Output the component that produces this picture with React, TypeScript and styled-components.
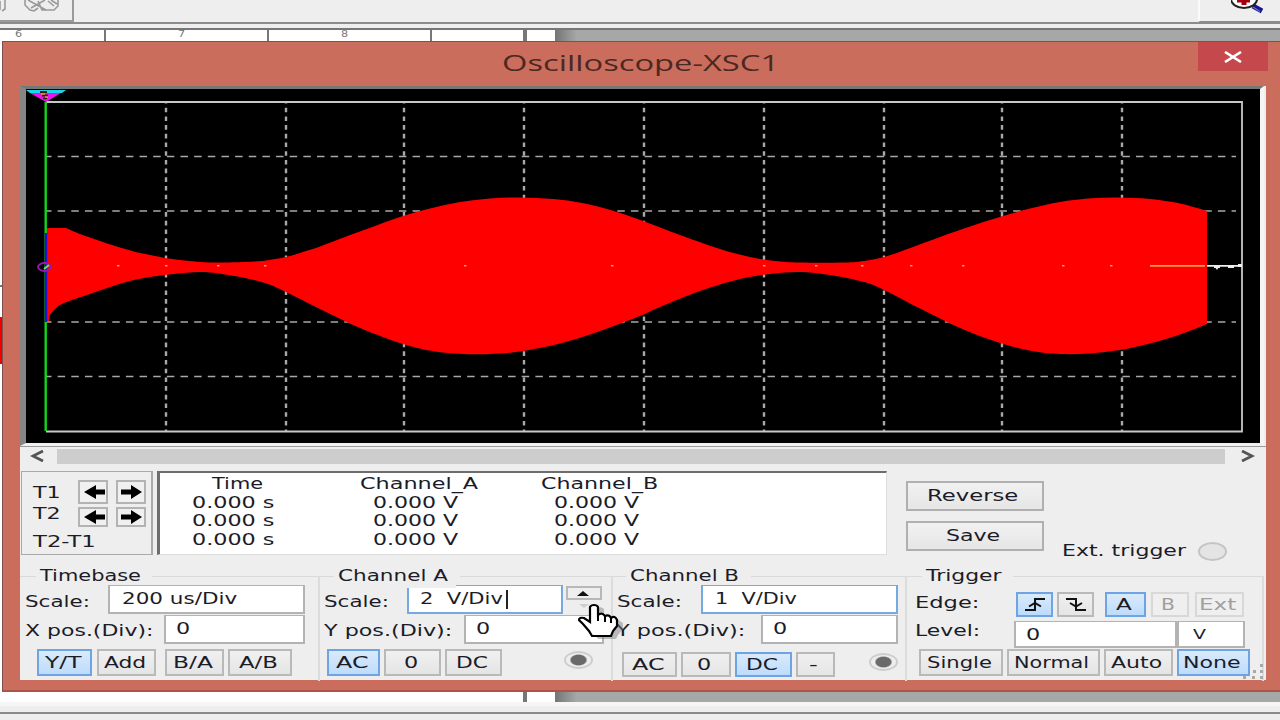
import React, { useLayoutEffect, useRef, useState } from "react";
import styled, { createGlobalStyle } from "styled-components";

const Global = createGlobalStyle`
  * { box-sizing: border-box; }
  body { margin: 0; overflow: hidden; font-family: "DejaVu Sans", sans-serif; color: #1c1c28; }
  svg { display: block; }
`;

const Desktop = styled.div`
  position: relative; width: 1280px; height: 720px; overflow: hidden;
  background: #eeeeee; display: flex; flex-direction: column;
`;
const Toolbar = styled.div`
  height: 24px; flex: none; display: flex; justify-content: space-between;
  border-bottom: 2px solid #8c8c8c;
`;
const ToolStart = styled.div`
  width: 74px; height: 22px; border-right: 2px solid #9a9a9a; border-bottom: 2px solid #9a9a9a;
`;
const ToolEnd = styled.div`
  width: 82px; height: 22px; border-left: 2px solid #fafafa; border-bottom: 1px solid #8c8c8c; padding-left: 31px;
`;
const Workspace = styled.div`
  height: 678px; margin-top: 4px; flex: none; display: flex; border-top: 2px solid #777;
  border-bottom: 4px solid #f6f6f6; background: #a6a8a8;
`;
const Sheet = styled.div`
  width: 555px; background: #fff; display: flex; align-items: flex-start; font-size: 9px; color: #777;
`;
const RulerCell = styled.div<{ $w: number; $p: number }>`
  width: ${p => p.$w}px; padding-left: ${p => p.$p}px; height: 12px; line-height: 9px; border-right: 2px solid #777; flex: none;
`;
const SheetEdge = styled.div`width: 4px; height: 100%; margin-left: 91px; background: #777;`;
const SheetShadow = styled.div`width: 22px; background: linear-gradient(90deg, #747474, #a6a8a8);`;
const StatusBar = styled.div`margin-top: 6px; height: 9px; border-top: 2px solid #8a8a8a;`;
const LeftStrip = styled.div`
  position: absolute; left: 0; top: 285px; width: 3px; height: 79px; border-top: 2px solid #777;
  background: linear-gradient(#fff 30px, #ee0000 30px);
`;

const Window = styled.div`
  position: absolute; left: 2px; top: 41px; width: 1290px; height: 651px; background: #cb6d5d;
  border: 1px solid #80504a; border-bottom: 2px solid #a8564b; padding: 0 0 0 17px; display: flex; flex-direction: column;
`;
const TitleBar = styled.div`height: 44px; flex: none; display: flex; color: #4a2823;`;
const TitleText = styled.div`
  width: 695px; padding: 5px 0 0 482px; height: 40px; flex: none; font-family: "Open Sans", sans-serif; font-size: 22px;
`;
const Close = styled.div`
  width: 70px; height: 29px; margin-left: 483px; background: #c5494c; display: flex; align-items: center; justify-content: center;
`;
const Client = styled.div`width: 1246px; height: 594px; background: #eeeeee; display: flex; flex-direction: column;`;
const ScopeFrame = styled.div`
  height: 360px; flex: none; border: solid; border-width: 3px 4px 3px 6px;
  border-color: #777 #f5f5f5 #f0f0f0 #858585; background: #000; width: 1244px;
`;
const Scrollbar = styled.div`
  height: 18px; flex: none; border-top: 1px solid #999; padding: 1px 10px 0 10px; display: flex; align-items: center;
`;
const Thumb = styled.div`width: 1168px; height: 15px; background: #cdcdcd; margin: 0 15px 0 12px;`;
const Readout = styled.div`height: 85px; margin-top: 7px; flex: none; display: flex;`;
const CursorBox = styled.div`
  width: 132px; margin-left: 1px; height: 84px; border: 2px solid #aaa; border-width: 1px 2px 1px 1px; display: flex; padding: 0 0 0 11px;
`;
const CursorLabels = styled.div`width: 45px; padding-top: 10px; flex: none;`;
const CursorLine = styled.div<{ $h: number }>`height: ${p => p.$h}px; line-height: 22px;`;
const ArrowGrid = styled.div`
  display: grid; grid-template-columns: 30px 30px; grid-auto-rows: 24px 20px; column-gap: 8px; row-gap: 3px; padding-top: 8px;
`;
const ArrowButton = styled.div<{ $left?: boolean }>`
  border: 2px solid #b3b3b3; background: #f0f0f0; display: flex; align-items: center;
  justify-content: ${p => (p.$left ? "flex-end" : "center")};
`;
const Table = styled.div`
  width: 730px; margin-left: 4px; height: 84px; background: #fff; border: solid; border-width: 2px 1px 1px 3px;
  border-color: #6d6d6d #ddd #ddd #6d6d6d; display: flex; padding-top: 2px;
`;
const Column = styled.div<{ $ml: number; $w: number }>`
  margin-left: ${p => p.$ml}px; width: ${p => p.$w}px; flex: none; display: flex; flex-direction: column;
`;
const Cell = styled.div<{ $in?: number }>`
  height: 18.7px; line-height: 18px; flex: none; padding-left: ${p => p.$in ?? 0}px;
`;
const Actions = styled.div`margin: 10px 0 0 19px; width: 138px; display: flex; flex-direction: column; gap: 10px;`;
const ActionButton = styled.div`
  height: 30px; border: 2px solid #b0b0b0; background: linear-gradient(#f1f1f1, #e6e6e6);
  display: flex; align-items: center; justify-content: center; padding-right: 3px;
`;
const ExtTrigger = styled.div`display: flex; align-items: center; gap: 10px; margin: 70px 0 0 18px; height: 20px;`;
const ExtLamp = styled.div`width: 29px; height: 19px; border: 2px solid #c4c4c4; border-radius: 50%; background: #e4e4e4; margin-top: 1px;`;

const Groups = styled.div`display: flex; height: 114px; margin-top: 11px; flex: none;`;
const Group = styled.div<{ $w: number }>`
  width: ${p => p.$w}px; height: 114px; flex: none; display: flex; flex-direction: column;
  border: solid; border-width: 0 2px 0 0;
  border-image: linear-gradient(transparent 10px, #dcdcdc 10px) 1;
`;
const Legend = styled.div<{ $lead: number }>`
  display: flex; align-items: center; height: 18px; line-height: 18px; gap: 4px; flex: none;
  &::before { content: ""; width: ${p => p.$lead}px; height: 1px; background: #dadada; flex: none; }
  &::after { content: ""; flex: 1; height: 1px; background: #dadada; margin-left: 6px; }
`;
const Row = styled.div<{ $h: number; $mt: number; $pl: number }>`
  display: flex; align-items: flex-start; height: ${p => p.$h}px; margin-top: ${p => p.$mt}px; padding-left: ${p => p.$pl}px; flex: none;
`;
const Caption = styled.div<{ $w: number; $pt?: number }>`
  width: ${p => p.$w}px; flex: none; line-height: 20px; padding-top: ${p => p.$pt ?? 7}px;
`;
const Field = styled.div<{ $w: number; $h?: number; $pl: number; $focus?: boolean; $covered?: boolean; $lh?: number }>`
  position: relative; width: ${p => p.$w}px; height: ${p => p.$h ?? 29}px; flex: none; background: #fff; padding-left: ${p => p.$pl}px;
  border: solid ${p => (p.$focus ? "#75a9e2" : "#b3b3b3")}; border-width: 1px 2px 2px 2px; line-height: ${p => p.$lh ?? 27}px;
  display: flex;
  ${p => p.$covered && `&::before { content: ""; position: absolute; left: -2px; top: -1px; width: 49px; height: 3px; background: #eee; }`}
`;
const Caret = styled.div`width: 2px; height: 19px; background: #222; margin: 4px 0 0 1px;`;
const Btn = styled.div<{ $w: number; $ml?: number; $h?: number; $on?: boolean; $off?: boolean; $icon?: boolean }>`
  width: ${p => p.$w}px; height: ${p => p.$h ?? 27}px; margin-left: ${p => p.$ml ?? 0}px; flex: none;
  display: flex; align-items: center; justify-content: center; line-height: 20px; padding-right: ${p => (p.$icon ? 0 : 2)}px;
  border: 2px solid ${p => (p.$on ? "#6ea4e4" : p.$off ? "#d8d8d8" : "#b9b9b9")};
  background: ${p => (p.$on ? "linear-gradient(#d9eafc, #bddcfb)" : p.$off ? "#efefef" : "linear-gradient(#f0f0f0, #e5e5e5)")};
  color: ${p => (p.$off ? "#a0a0a0" : "inherit")};
`;
const SpinnerColumn = styled.div`
  display: flex; flex-direction: column; align-items: center; gap: 4px; margin: 1px 0 0 3px;
`;
const Spinner = styled.div`
  width: 36px; height: 14px; border: 2px solid #b8b8b8; display: flex; align-items: center; justify-content: center; padding-right: 3px;
`;
const Terminal = styled.div<{ $ml: number; $mt: number }>`
  width: 29px; height: 18px; margin: ${p => p.$mt}px 0 0 ${p => p.$ml}px; border: 2px solid #cdcdcd; border-radius: 50%; flex: none;
  background: radial-gradient(ellipse 9px 6px, #6a6a6a 80%, #eee 100%);
`;
const Grip = styled.svg`position: absolute; left: 1238px; top: 622px;`;
const Pointer = styled.svg`position: absolute; left: 574px; top: 601px;`;

const Stretch = styled.span<{ $size: number }>`
  display: inline-block; flex: none; font-size: ${p => p.$size}px; white-space: pre; vertical-align: top;
`;
const StretchInner = styled.span`display: inline-block; transform-origin: 0 50%; white-space: pre;`;

function T({ w, size = 15.4, children }: { w: number; size?: number; children: string }) {
  const ref = useRef<HTMLSpanElement>(null);
  const [k, setK] = useState(1.37);
  useLayoutEffect(() => {
    if (ref.current) setK((w - 1.5) / ref.current.offsetWidth);
  }, [w, children]);
  return (
    <Stretch $size={size} style={{ width: w }}>
      <StretchInner ref={ref} style={{ transform: `scaleX(${k})` }}>{children}</StretchInner>
    </Stretch>
  );
}

type Pt = [number, number];

const upper: Pt[] = [
  [66, 228], [80, 234], [97, 240], [112, 245], [132, 251], [150, 255], [165, 258], [180, 260], [200, 262], [220, 262.5],
  [245, 262], [262, 261], [272, 259.5], [286, 257], [300, 253], [320, 246.5], [345, 237], [375, 226], [403, 216], [430, 208.5],
  [460, 202], [490, 198.5], [520, 197.5], [553, 199], [582, 203], [612, 210.5], [643, 221], [680, 235], [720, 249], [750, 257],
  [775, 261], [800, 262.5], [845, 262.5], [864, 261], [884, 257], [902, 251], [940, 237], [970, 226.5], [1000, 217], [1030, 208.5],
  [1060, 202], [1088, 198.5], [1118, 197.5], [1150, 199], [1180, 203.5], [1207, 211],
];
const lower: Pt[] = [
  [1207, 324], [1180, 334.5], [1150, 343.5], [1120, 350], [1090, 353.5], [1060, 354], [1035, 351.5], [1000, 343], [960, 328],
  [920, 308.5], [880, 288], [860, 281], [830, 275], [800, 272], [770, 274], [740, 279], [700, 291], [660, 307], [640, 316],
  [600, 331], [560, 343.5], [520, 351.5], [490, 354], [465, 354], [435, 351.5], [403, 344], [360, 328], [320, 309], [286, 292],
  [265, 283], [240, 277], [210, 272.5], [190, 272.5], [165, 275], [150, 277], [130, 281], [110, 287], [90, 294], [64, 303],
  [55, 309], [50, 315],
];

function spline(pts: Pt[]) {
  return pts
    .slice(1)
    .map((p, i) => {
      const a = pts[Math.max(i - 1, 0)];
      const b = pts[i];
      const d = pts[Math.min(i + 2, pts.length - 1)];
      return `C${b[0] + (p[0] - a[0]) / 6},${b[1] + (p[1] - a[1]) / 6} ${p[0] - (d[0] - b[0]) / 6},${p[1] - (d[1] - b[1]) / 6} ${p[0]},${p[1]}`;
    })
    .join(" ");
}

const wave = `M47,228 H66 ${spline(upper)} V324 ${spline(lower)} L49,321 H47 Z`;

function Scope() {
  return (
    <svg width="1234" height="354" viewBox="26 89 1234 354">
      <g stroke="#a8a8a8">
        {[166, 286, 404, 524, 644, 764, 884, 1002, 1122].map(x => (
          <line key={x} x1={x} x2={x} y1="102" y2="431" strokeWidth="2.4" strokeDasharray="4.6 4.1" strokeDashoffset="3" />
        ))}
        {[156.5, 211, 322, 376.5].map(y => (
          <line key={y} x1="45" x2="1236" y1={y} y2={y} strokeWidth="1.7" strokeDasharray="7.5 6.15" strokeDashoffset="1" />
        ))}
      </g>
      <path d="M46,102 H1242 V431.5 H46" fill="none" stroke="#c8c8c8" strokeWidth="1.8" />
      <path d={wave} fill="#ff0000" />
      <path d="M45.7,102 V431" stroke="#14d51c" strokeWidth="2.4" />
      <path d="M46,233 V322" stroke="#2410cf" strokeWidth="2.4" />
      <path d="M26,90 H66 L62,93 H30 Z" fill="#16d8e8" />
      <path d="M30,93 H61 L46,102 Z" fill="#ed12ee" />
      <path d="M40,92 H47 M42,95.5 H48 M43,98.3 H47" stroke="#332200" strokeWidth="1.8" />
      <path d="M41,94 H45 M45,97 H48" stroke="#e8d020" strokeWidth="1" />
      <ellipse cx="44.5" cy="267" rx="6.5" ry="4" fill="none" stroke="#9c14b8" strokeWidth="1.8" />
      <path d="M44,269 L49,265" stroke="#77dd55" strokeWidth="2" />
      {[118, 166, 218, 265, 465, 612, 764, 816, 862, 911, 963, 1063, 1111].map(x => (
        <rect key={x} x={x - 1} y="265" width="2.5" height="1.5" fill="#ff9a60" />
      ))}
      <path d="M1150,265.8 H1205" stroke="#ff9d42" strokeWidth="1.7" />
      <path d="M1207,265.8 H1242 M1214,267 H1220 M1228,267 H1234" stroke="#eee" strokeWidth="1.8" />
      <path d="M1215,267 H1219 L1217,270 Z M1238,264 H1242 V267 H1238 Z" fill="#eee" />
    </svg>
  );
}

function Arrow({ left }: { left?: boolean }) {
  return (
    <svg width="22" height="14" viewBox="0 0 22 14">
      <path d={left ? "M0,7 L12,0 V4.500 H21 V9.500 H12 V14 Z" : "M22,7 L11,0 V4.500 H1 V9.500 H11 V14 Z"} fill="#000" />
    </svg>
  );
}

function Chevron({ left }: { left?: boolean }) {
  return (
    <svg width="15" height="12" viewBox="0 0 15 12">
      <path d={left ? "M13,1 L3,6 L13,11" : "M2,1 L12,6 L2,11"} fill="none" stroke="#555" strokeWidth="2.8" />
    </svg>
  );
}

function EdgeIcon({ falling }: { falling?: boolean }) {
  return (
    <svg width="24" height="16" viewBox="0 0 24 16" fill="none" stroke="#111" strokeWidth="2">
      {falling ? <path d="M2,2 H12 V13 H22 M6,6 L12,9.500 L18,6" /> : <path d="M2,13 H12 V2 H22 M6,9.500 L12,6 L18,9.500" />}
    </svg>
  );
}

export default function App() {
  return (
    <Desktop>
      <Global />
      <Toolbar>
        <ToolStart>
          <svg width="64" height="13" viewBox="0 0 64 13" fill="none" stroke="#9a9a9a" strokeWidth="1.6">
            <path d="M0,1 V10 M5,0 V9 L2,11 M25,0 V5 L30,10 L34,11 L38,8 M28,0 L46,10 M45,0 L31,8 M38,1 L42,10 H54 L58,6 V0 M48,1 L54,6 M51,0 L57,4" />
          </svg>
        </ToolStart>
        <ToolEnd>
          <svg width="36" height="14" viewBox="0 0 36 14">
            <path d="M22,6 L31,11" stroke="#15158c" strokeWidth="5" />
            <path d="M22,7 L29,11.5" stroke="#7070d0" strokeWidth="1.2" />
            <ellipse cx="13" cy="-1" rx="13" ry="9" fill="#fff" stroke="#222" strokeWidth="2" />
            <path d="M6,0 H19 M13,-5 V5" stroke="#a40010" strokeWidth="5" />
          </svg>
        </ToolEnd>
      </Toolbar>
      <Workspace>
        <Sheet>
          <RulerCell $w={106} $p={15}><T w={9} size={9}>6</T></RulerCell>
          <RulerCell $w={163} $p={72}><T w={9} size={9}>7</T></RulerCell>
          <RulerCell $w={163} $p={72}><T w={9} size={9}>8</T></RulerCell>
          <SheetEdge />
        </Sheet>
        <SheetShadow />
      </Workspace>
      <StatusBar />
      <LeftStrip />

      <Window>
        <TitleBar>
          <TitleText><T w={278} size={22}>Oscilloscope-XSC1</T></TitleText>
          <Close>
            <svg width="20" height="12" viewBox="0 0 20 12"><path d="M2,1 L18,11 M18,1 L2,11" stroke="#fff" strokeWidth="2.6" /></svg>
          </Close>
        </TitleBar>
        <Client>
          <ScopeFrame><Scope /></ScopeFrame>
          <Scrollbar><Chevron left /><Thumb /><Chevron /></Scrollbar>
          <Readout>
            <CursorBox>
              <CursorLabels>
                <CursorLine $h={21}><T w={29}>T1</T></CursorLine>
                <CursorLine $h={28}><T w={29}>T2</T></CursorLine>
                <CursorLine $h={20}><T w={65}>T2-T1</T></CursorLine>
              </CursorLabels>
              <ArrowGrid>
                <ArrowButton $left><Arrow left /></ArrowButton>
                <ArrowButton><Arrow /></ArrowButton>
                <ArrowButton $left><Arrow left /></ArrowButton>
                <ArrowButton><Arrow /></ArrowButton>
              </ArrowGrid>
            </CursorBox>
            <Table>
              <Column $ml={32} $w={90}>
                <Cell $in={20}><T w={53}>Time</T></Cell>
                {[0, 1, 2].map(i => <Cell key={i}><T w={84}>0.000 s</T></Cell>)}
              </Column>
              <Column $ml={78} $w={120}>
                <Cell><T w={119}>Channel_A</T></Cell>
                {[0, 1, 2].map(i => <Cell key={i} $in={13}><T w={86}>0.000 V</T></Cell>)}
              </Column>
              <Column $ml={61} $w={118}>
                <Cell><T w={118}>Channel_B</T></Cell>
                {[0, 1, 2].map(i => <Cell key={i} $in={13}><T w={86}>0.000 V</T></Cell>)}
              </Column>
            </Table>
            <Actions>
              <ActionButton><T w={93}>Reverse</T></ActionButton>
              <ActionButton><T w={56}>Save</T></ActionButton>
            </Actions>
            <ExtTrigger><T w={126}>Ext. trigger</T><ExtLamp /></ExtTrigger>
          </Readout>
          <Groups>
            <Group $w={300}>
              <Legend $lead={16}><T w={102}>Timebase</T></Legend>
              <Row $h={29} $mt={0} $pl={5}>
                <Caption $w={83}><T w={67}>Scale:</T></Caption>
                <Field $w={197} $pl={12}><T w={116}>200 us/Div</T></Field>
              </Row>
              <Row $h={29} $mt={1} $pl={5}>
                <Caption $w={139} $pt={6}><T w={130}>X pos.(Div):</T></Caption>
                <Field $w={141} $pl={10}><T w={16}>0</T></Field>
              </Row>
              <Row $h={27} $mt={5} $pl={17}>
                <Btn $w={55} $on><T w={38}>Y/T</T></Btn>
                <Btn $w={59} $ml={5}><T w={44}>Add</T></Btn>
                <Btn $w={59} $ml={9}><T w={41}>B/A</T></Btn>
                <Btn $w={64} $ml={4}><T w={40}>A/B</T></Btn>
              </Row>
            </Group>
            <Group $w={293}>
              <Legend $lead={14}><T w={112}>Channel A</T></Legend>
              <Row $h={29} $mt={0} $pl={4}>
                <Caption $w={83}><T w={67}>Scale:</T></Caption>
                <Field $w={156} $pl={11} $focus $covered><T w={85}>2  V/Div</T><Caret /></Field>
                <SpinnerColumn>
                  <Spinner><svg width="12" height="5" viewBox="0 0 12 5"><path d="M0,5 L6,0 L12,5 Z" fill="#111" /></svg></Spinner>
                  <svg width="10" height="4" viewBox="0 0 10 4"><path d="M0,0 H10 L5,4 Z" fill="#cfcfcf" /></svg>
                </SpinnerColumn>
              </Row>
              <Row $h={29} $mt={1} $pl={4}>
                <Caption $w={140} $pt={6}><T w={130}>Y pos.(Div):</T></Caption>
                <Field $w={140} $pl={10}><T w={16}>0</T></Field>
              </Row>
              <Row $h={27} $mt={5} $pl={7}>
                <Btn $w={53} $on><T w={34}>AC</T></Btn>
                <Btn $w={57} $ml={4}><T w={16}>0</T></Btn>
                <Btn $w={57} $ml={4}><T w={34}>DC</T></Btn>
                <Terminal $ml={62} $mt={2} />
              </Row>
            </Group>
            <Group $w={294}>
              <Legend $lead={13}><T w={111}>Channel B</T></Legend>
              <Row $h={29} $mt={0} $pl={4}>
                <Caption $w={84}><T w={67}>Scale:</T></Caption>
                <Field $w={197} $pl={12} $focus><T w={84}>1  V/Div</T></Field>
              </Row>
              <Row $h={29} $mt={1} $pl={3}>
                <Caption $w={145} $pt={6}><T w={131}>Y pos.(Div):</T></Caption>
                <Field $w={137} $pl={10}><T w={16}>0</T></Field>
              </Row>
              <Row $h={25} $mt={8} $pl={9}>
                <Btn $w={55} $h={25}><T w={34}>AC</T></Btn>
                <Btn $w={50} $h={25} $ml={4}><T w={16}>0</T></Btn>
                <Btn $w={57} $h={25} $ml={4} $on><T w={34}>DC</T></Btn>
                <Btn $w={39} $h={25} $ml={4}><T w={11}>-</T></Btn>
                <Terminal $ml={34} $mt={1} />
              </Row>
            </Group>
            <Group $w={357}>
              <Legend $lead={15}><T w={77}>Trigger</T></Legend>
              <Row $h={25} $mt={7} $pl={8}>
                <Caption $w={101} $pt={1}><T w={66}>Edge:</T></Caption>
                <Btn $w={37} $h={25} $on $icon><EdgeIcon /></Btn>
                <Btn $w={37} $h={25} $ml={4} $icon><EdgeIcon falling /></Btn>
                <Btn $w={41} $h={25} $ml={11} $on><T w={18}>A</T></Btn>
                <Btn $w={38} $h={25} $ml={5} $off><T w={16}>B</T></Btn>
                <Btn $w={49} $h={25} $ml={6} $off><T w={39}>Ext</T></Btn>
              </Row>
              <Row $h={27} $mt={4} $pl={8}>
                <Caption $w={99} $pt={0}><T w={67}>Level:</T></Caption>
                <Field $w={163} $h={27} $pl={10} $lh={26}><T w={16}>0</T></Field>
                <Field $w={68} $h={27} $pl={14} $lh={24}><T w={15} size={14}>V</T></Field>
              </Row>
              <Row $h={27} $mt={1} $pl={12}>
                <Btn $w={84}><T w={66}>Single</T></Btn>
                <Btn $w={93} $ml={4}><T w={77}>Normal</T></Btn>
                <Btn $w={69} $ml={4}><T w={53}>Auto</T></Btn>
                <Btn $w={73} $ml={4} $on><T w={59}>None</T></Btn>
              </Row>
            </Group>
          </Groups>
        </Client>
        <Grip width="26" height="16" fill="#a8a8a8">
          <path d="M19,0 h3 v3 h-3z M12,6 h3 v3 h-3z M19,6 h3 v3 h-3z M2,12 h3 v3 h-3z M11,12 h3 v3 h-3z M19,12 h3 v3 h-3z" />
        </Grip>
      </Window>

      <Pointer width="52" height="40" viewBox="0 0 52 40">
        <g transform="translate(4 3)">
          <path d="M16,2 Q19,0 22,3 V10 L28,11 L35,13 L41,17 V23 L36,29 L34,33 H16 L8,22 L3,16 Q6,13 11,17 L16,21 Z" fill="#777" opacity=".45" transform="translate(4 2)" />
          <path d="M12,3 Q13,1 16,1 Q19,1 20,3 V11 Q24,8 27,12 Q31,10 33,14 Q37,11 39,16 V22 L35,27 L33,32 H14 L11,27 L5,20 L1,16 Q1,13 6,14 L12,18 Z" fill="#fff" stroke="#000" strokeWidth="2.2" />
          <path d="M20,10 V17 M27,12 V18 M33,14 V19" stroke="#000" strokeWidth="2" />
        </g>
      </Pointer>
    </Desktop>
  );
}
